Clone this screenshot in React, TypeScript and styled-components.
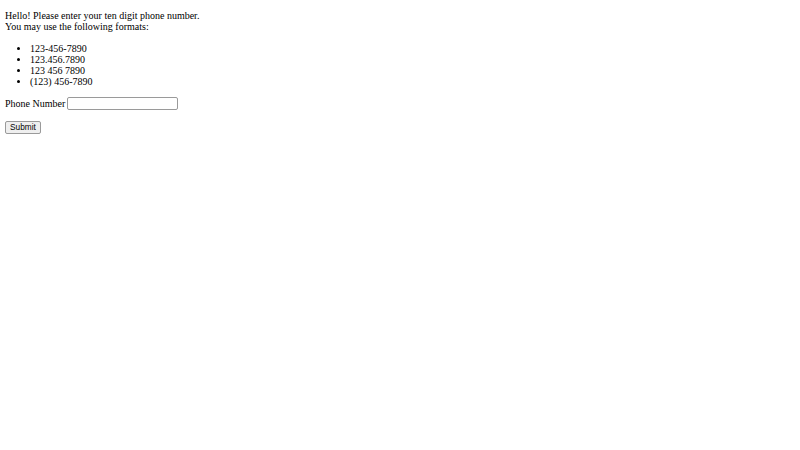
import React from 'react';
import styled, { createGlobalStyle } from 'styled-components';

const GlobalStyle = createGlobalStyle`
  html, body {
    background: #ffffff;
  }
  body {
    margin: 5px;
    font-family: "Liberation Serif", "Times New Roman", serif;
    font-size: 10px;
    line-height: 11.3px;
    color: #000000;
  }
`;

const Intro = styled.p`
  margin: 5px 0 10px;
`;

const Formats = styled.ul`
  margin: 10px 0 9px;
  padding-left: 25px;
  list-style: disc;
`;

const Field = styled.div`
  display: flex;
  align-items: center;
  margin: 9px 0 10px;
`;

const Label = styled.label`
  margin-right: 2px;
`;

const Input = styled.input`
  box-sizing: border-box;
  width: 111px;
  height: 13px;
  padding: 1px 2px;
  border: 1px solid #9a9a9a;
  border-radius: 2px;
  font-size: 8px;
  background: #ffffff;
`;

const SubmitButton = styled.button`
  box-sizing: border-box;
  height: 13px;
  padding: 0 4px;
  font-family: "Liberation Sans", Arial, sans-serif;
  font-size: 8.3px;
  line-height: 11px;
  color: #000000;
  background: #efefef;
  border: 1px solid #9a9a9a;
  border-radius: 2px;
  margin-top: 1px;
`;

const formats = ['123-456-7890', '123.456.7890', '123 456 7890', '(123) 456-7890'];

export default function App() {
  return (
    <>
      <GlobalStyle />
      <Intro>
        Hello! Please enter your ten digit phone number.
        <br />
        You may use the following formats:
      </Intro>
      <Formats>
        {formats.map((f) => (
          <li key={f}>{f}</li>
        ))}
      </Formats>
      <form onSubmit={(e) => e.preventDefault()}>
        <Field>
          <Label htmlFor="phone">Phone Number</Label>
          <Input id="phone" type="text" />
        </Field>
        <SubmitButton type="submit">Submit</SubmitButton>
      </form>
    </>
  );
}
